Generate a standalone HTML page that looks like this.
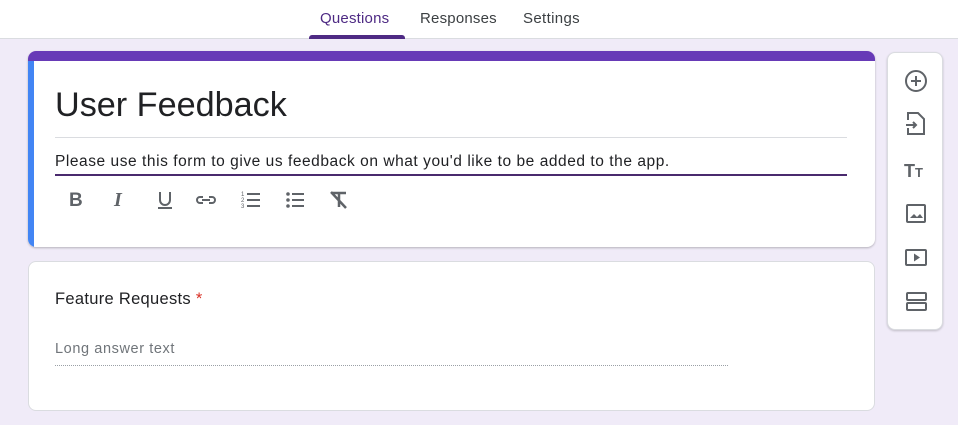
<!DOCTYPE html>
<html><head><style>
*{margin:0;padding:0;box-sizing:border-box}
body{width:958px;height:425px;background:#f0ebf8;font-family:"Liberation Sans",Roboto,sans-serif;position:relative;overflow:hidden;color:#202124}
.hdr{position:absolute;left:0;top:0;width:958px;height:39px;background:#fff;border-bottom:1px solid #dadce0}
.tab{position:absolute;top:10px;font-size:15px;letter-spacing:.35px;color:#3c4043}
.card{position:absolute;background:#fff;border-radius:8px;border:1px solid #dadce0}
</style></head><body>
<div class="hdr">
<div class="tab" style="left:320px;color:#4e2a84;font-weight:500;letter-spacing:.2px">Questions</div>
<div style="position:absolute;left:309px;top:35px;width:96px;height:4px;background:#4e2a84;border-radius:3px 3px 0 0"></div>
<div class="tab" style="left:420px;letter-spacing:.2px">Responses</div>
<div class="tab" style="left:523px">Settings</div>
</div>
<div class="card" style="left:28px;top:51px;width:847px;height:196px;overflow:hidden;box-shadow:0 1px 2px rgba(0,0,0,.25);border:none">
<div style="position:absolute;left:0;top:0;width:100%;height:10px;background:#673ab7"></div>
<div style="position:absolute;left:0;top:10px;width:6px;height:186px;background:#4285f4"></div>
<div style="position:absolute;left:27px;top:35px;font-size:34.2px;color:#202124">User Feedback</div>
<div style="position:absolute;left:27px;top:86px;width:792px;height:1px;background:#dadce0"></div>
<div style="position:absolute;left:27px;top:102px;font-size:15.5px;letter-spacing:.55px">Please use this form to give us feedback on what you'd like to be added to the app.</div>
<div style="position:absolute;left:27px;top:123px;width:792px;height:2px;background:#4a2a6e"></div>
<svg style="position:absolute;left:36px;top:136px" width="300" height="26" viewBox="0 0 300 26" fill="none" stroke="#5f6368">
<text x="5" y="19" font-family="Liberation Sans" font-weight="bold" font-size="19" fill="#5f6368" stroke="none">B</text>
<text x="50" y="19" font-family="Liberation Serif" font-weight="bold" font-style="italic" font-size="20" fill="#5f6368" stroke="none">I</text>
<path d="M96 5v8a5 5 0 0 0 10 0V5M94 21h14" stroke-width="2"/>
<path d="M139 10h-3a3 3 0 0 0 0 6h3M145 10h3a3 3 0 0 1 0 6h-3M138 13h8" stroke-width="2"/>
<text x="177" y="9" font-size="6" fill="#5f6368" stroke="none">1</text><text x="177" y="15" font-size="6" fill="#5f6368" stroke="none">2</text><text x="177" y="21" font-size="6" fill="#5f6368" stroke="none">3</text>
<path d="M183 7h13M183 13h13M183 19h13" stroke-width="2"/>
<circle cx="224" cy="7" r="1.3" fill="#5f6368"/><circle cx="224" cy="13" r="1.3" fill="#5f6368"/><circle cx="224" cy="19" r="1.3" fill="#5f6368"/>
<path d="M228 7h12M228 13h12M228 19h12" stroke-width="2"/>
<path d="M268 6h14M275 6v14M267 5l15 16" stroke-width="2.5"/>
</svg>
</div>
<div class="card" style="left:28px;top:261px;width:847px;height:150px">
<div style="position:absolute;left:26px;top:28px;font-size:16.5px;letter-spacing:.3px">Feature Requests <span style="color:#d93025">*</span></div>
<div style="position:absolute;left:26px;top:79px;font-size:14.5px;letter-spacing:.6px;color:#70757a">Long answer text</div>
<div style="position:absolute;left:26px;top:103px;width:673px;border-top:1px dotted #9aa0a6"></div>
</div>
<div class="card" style="left:887px;top:52px;width:56px;height:278px;box-shadow:0 1px 2px rgba(0,0,0,.2)">
<svg style="position:absolute;left:15px;top:16px" width="26" height="250" viewBox="0 0 26 250" fill="none" stroke="#5f6368" stroke-width="2">
<circle cx="13" cy="12" r="10"/><path d="M13 7v10M8 12h10"/>
<path d="M5 51v-7h10l6 6v15H5v-6M3 56h10M10 53l3 3-3 3"/>
<text x="1" y="108" font-family="Liberation Sans" font-weight="bold" font-size="18" fill="#5f6368" stroke="none">T</text><text x="12" y="108" font-family="Liberation Sans" font-weight="bold" font-size="13" fill="#5f6368" stroke="none">T</text>
<rect x="4" y="136" width="18" height="17" rx="1"/><path d="M7 149l4-4 3 3 3-3 3 4z" fill="#5f6368" stroke="none"/>
<rect x="3" y="181" width="20" height="15" rx="1"/><path d="M11 184.5v8l6-4z" fill="#5f6368" stroke="none"/>
<rect x="4" y="224" width="19" height="7" rx="1"/><rect x="4" y="234" width="19" height="7" rx="1"/>
</svg>
</div>
</body></html>
